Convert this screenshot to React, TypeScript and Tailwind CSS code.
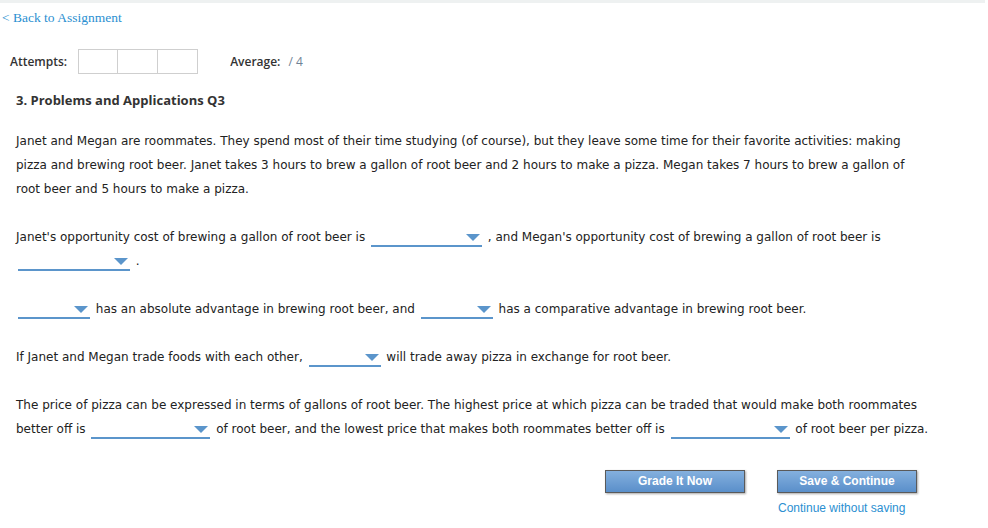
import React from "react";

function Drop({ w }: { w: string }) {
  return (
    <span
      className={`relative inline-block h-[17px] ${w} mx-[2px] border-b-2 border-[#5b95cb] align-[-6px]`}
    >
      <span className="absolute right-[2px] top-[4px] h-0 w-0 border-x-[7px] border-t-[7px] border-x-transparent border-t-[#5b95cb]" />
    </span>
  );
}

export default function App() {
  return (
    <div className="min-h-[528px] w-[988px] bg-white font-['Liberation_Sans',Arial,sans-serif] text-[#222]">
      <div className="h-[3px] w-[985px] bg-[#eef1f1]" />

      <div className="px-[2px] pt-[2px]">
        <a className="font-['Liberation_Serif',serif] text-[13.5px] text-[#2b8fd1]">
          &lt; Back to Assignment
        </a>
      </div>

      {/* attempts */}
      <div className="mt-[20px] flex items-center pl-[10px] font-['Open_Sans',sans-serif] text-[12px] font-semibold text-[#333]">
        <span>Attempts:</span>
        <div className="ml-[11px] flex">
          <div className="h-[25px] w-[40px] border border-[#cfcfcf]" />
          <div className="h-[25px] w-[40px] border border-l-0 border-[#cfcfcf]" />
          <div className="h-[25px] w-[40px] border border-l-0 border-[#cfcfcf]" />
        </div>
        <span className="ml-[32px]">Average:</span>
        <span className="ml-[8px] font-normal text-[#6f8296]">/ 4</span>
      </div>

      <div className="px-[16px]">
        <h2 className="mt-[17px] font-['Open_Sans',sans-serif] text-[13px] font-bold text-[#333]">
          3. Problems and Applications Q3
        </h2>

        <div className="mt-[18px] w-[916px] font-['DejaVu_Sans',Verdana,sans-serif] text-[12px] leading-[24px]">
          <p>
            Janet and Megan are roommates. They spend most of their time studying (of course), but they leave some
            time for their favorite activities: making pizza and brewing root beer. Janet takes 3 hours to brew a
            gallon of root beer and 2 hours to make a pizza. Megan takes 7 hours to brew a gallon of root beer and 5
            hours to make a pizza.
          </p>

          <p className="mt-[24px]">
            Janet's opportunity cost of brewing a gallon of root beer is <Drop w="w-[111px]" /> , and Megan's
            opportunity cost of brewing a gallon of root beer is <Drop w="w-[112px]" /> .
          </p>

          <p className="mt-[24px]">
            <Drop w="w-[72px]" /> has an absolute advantage in brewing root beer, and <Drop w="w-[72px]" /> has a
            comparative advantage in brewing root beer.
          </p>

          <p className="mt-[24px]">
            If Janet and Megan trade foods with each other, <Drop w="w-[72px]" /> will trade away pizza in exchange
            for root beer.
          </p>

          <p className="mt-[24px]">
            The price of pizza can be expressed in terms of gallons of root beer. The highest price at which pizza can
            be traded that would make both roommates better off is <Drop w="w-[119px]" /> of root beer, and the
            lowest price that makes both roommates better off is <Drop w="w-[119px]" /> of root beer per pizza.
          </p>
        </div>
      </div>

      {/* buttons */}
      <div className="mt-[29px] flex justify-end gap-[32px] pr-[71px]">
        <button className="h-[23px] w-[140px] border border-[#5a5a5a] bg-gradient-to-b from-[#84b0de] to-[#5a8fca] text-[12px] font-bold text-white shadow-[1px_1px_2px_rgba(0,0,0,0.35)]">
          Grade It Now
        </button>
        <div className="flex w-[140px] flex-col">
          <button className="h-[23px] w-[140px] border border-[#5a5a5a] bg-gradient-to-b from-[#84b0de] to-[#5a8fca] text-[12px] font-bold text-white shadow-[1px_1px_2px_rgba(0,0,0,0.35)]">
            Save &amp; Continue
          </button>
          <a className="mt-[6px] pl-[1px] text-[12px] text-[#2b8fd1]">Continue without saving</a>
        </div>
      </div>
    </div>
  );
}
